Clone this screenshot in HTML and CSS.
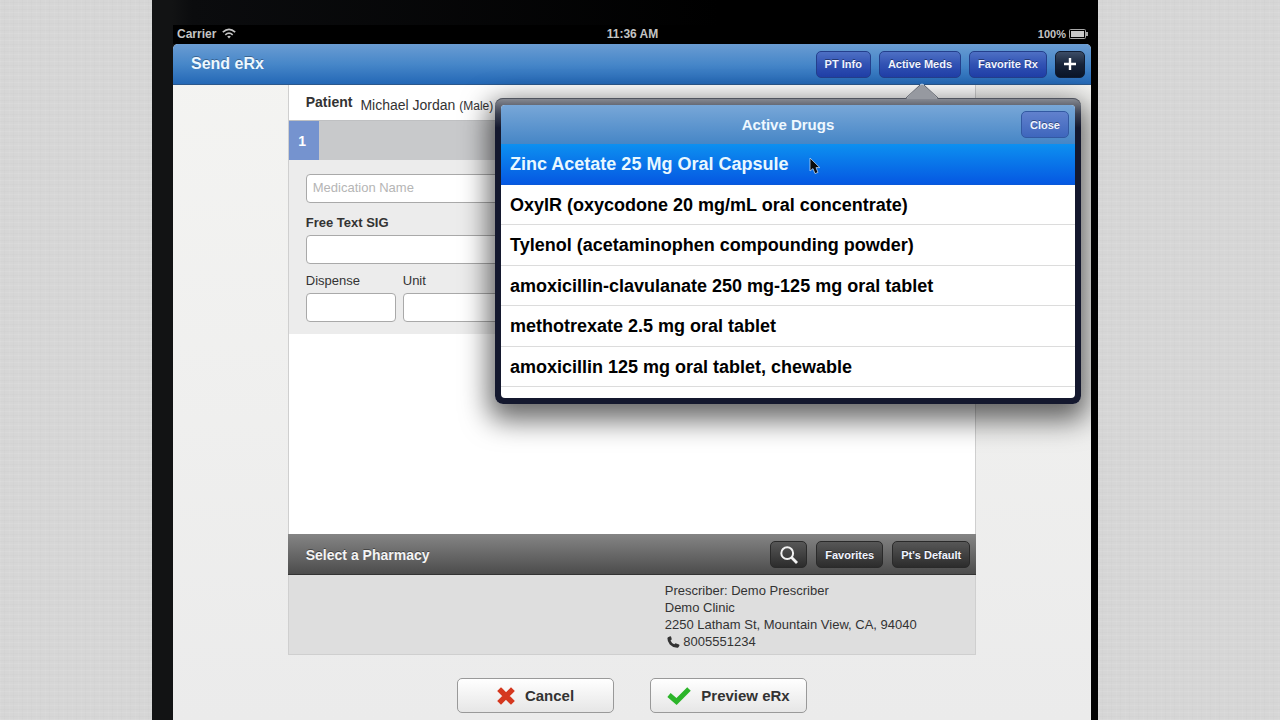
FILE: index.html
```html
<!DOCTYPE html>
<html lang="en">
    <head>
        <meta charset="UTF-8">
        <title>Send eRx</title>
        <link rel="stylesheet" href="styles.css">
    </head>
    <body>
        <div class="device">
            <div class="statusbar">
                <span class="carrier">Carrier
                    <svg width="14" height="11" viewBox="0 0 14 11" fill="none" stroke="#c4c4c4" stroke-width="1.6">
                        <path d="M0.8 4.2 Q7 -1.6 13.2 4.2"/>
                        <path d="M3.3 6.8 Q7 3.4 10.7 6.8"/>
                        <path d="M5.2 8.6 Q7 7 8.8 8.6 L7 10.6 Z" fill="#c4c4c4" stroke="none"/>
                    </svg>
                </span>
                <span class="clock">11:36 AM</span>
                <span class="battery">100%
                    <svg width="19" height="10" viewBox="0 0 19 10">
                        <rect x="0.5" y="0.5" width="16" height="9" rx="1" fill="none" stroke="#a8a8a8"/>
                        <rect x="2" y="2" width="13" height="6" fill="#c8c8c8"/>
                        <rect x="17" y="3" width="2" height="4" fill="#a8a8a8"/>
                    </svg>
                </span>
            </div>

            <div class="screen">
                <header class="navbar">
                    <h1>Send eRx</h1>
                    <button class="btn btn-blue">PT Info</button>
                    <button class="btn btn-blue">Active Meds</button>
                    <button class="btn btn-blue">Favorite Rx</button>
                    <button class="btn btn-add" aria-label="Add">
                        <svg width="12" height="12" viewBox="0 0 12 12" stroke="#fff" stroke-width="2.4"><path d="M6 0V12M0 6H12"/></svg>
                    </button>
                </header>

                <main class="sheet">
                    <div class="patient">
                        <b>Patient</b>
                        <span class="name">Michael Jordan <small>(Male)</small></span>
                    </div>
                    <div class="med-tabs"><span class="tab">1</span></div>
                    <form class="med-form">
                        <input class="med-name" type="text" placeholder="Medication Name" aria-label="Medication Name">
                        <label class="strong" for="sig">Free Text SIG</label>
                        <input id="sig" type="text">
                        <div class="amounts">
                            <div class="dispense">
                                <label for="dispense">Dispense</label>
                                <input id="dispense" type="text">
                            </div>
                            <div class="unit">
                                <label for="unit">Unit</label>
                                <input id="unit" type="text">
                            </div>
                        </div>
                    </form>
                    <div class="blank"></div>
                    <div class="pharmacy">
                        <h2>Select a Pharmacy</h2>
                        <button class="btn btn-dark btn-search" aria-label="Search">
                            <svg width="18" height="18" viewBox="0 0 18 18" fill="none" stroke="#f2f2f2">
                                <circle cx="7.2" cy="7.2" r="5.9" stroke-width="2"/>
                                <path d="M11.6 11.6L17 17" stroke-width="2.8"/>
                            </svg>
                        </button>
                        <button class="btn btn-dark">Favorites</button>
                        <button class="btn btn-dark">Pt's Default</button>
                    </div>
                    <div class="prescriber">
                        <address>
                            Prescriber: Demo Prescriber<br>
                            Demo Clinic<br>
                            2250 Latham St, Mountain View, CA, 94040<br>
                            <svg width="13" height="12" viewBox="0 0 13 12"><path fill="#333" d="M1 1.2 L3.2 0.2 Q3.9 0.1 4.1 0.8 L4.7 3 Q4.7 3.6 4.2 3.9 L3.5 4.4 Q4.4 6.8 7.2 8.2 L8.2 7.5 Q8.7 7.2 9.2 7.4 L12 8.6 Q12.7 9 12.4 9.7 L11.4 11.3 Q11 11.8 10.2 11.8 Q5.8 11.6 2.8 8.4 Q0.3 5.4 0.4 2.2 Q0.5 1.5 1 1.2 Z"/></svg>
                            8005551234
                        </address>
                    </div>
                </main>

                <div class="actions">
                    <button class="btn-action">
                        <svg width="18" height="18" viewBox="0 0 18 18" stroke="#d5381f" stroke-width="5.4" stroke-linecap="square"><path d="M4 4L14 14M14 4L4 14"/></svg>
                        Cancel
                    </button>
                    <button class="btn-action">
                        <svg width="24" height="18" viewBox="0 0 24 18" fill="none" stroke="#2cb52a" stroke-width="5"><path d="M2 8L9.5 14.5L22 2"/></svg>
                        Preview eRx
                    </button>
                </div>

                <section class="popover">
                    <svg class="arrow" width="32" height="16" viewBox="0 0 32 16">
                        <path d="M0 16L14 2Q16 0 18 2L32 16Z" fill="#9699a0"/>
                        <path d="M0 15L14 2M18 2L32 15" fill="none" stroke="#5d626c"/>
                        <path d="M14 2Q16 0 18 2" fill="none" stroke="#b9d2ea"/>
                    </svg>
                    <div class="popover-body">
                        <div class="popover-head">
                            <h2>Active Drugs</h2>
                            <button class="btn btn-close">Close</button>
                        </div>
                        <ul class="drugs">
                            <li class="selected">Zinc Acetate 25 Mg Oral Capsule</li>
                            <li>OxyIR (oxycodone 20 mg/mL oral concentrate)</li>
                            <li>Tylenol (acetaminophen compounding powder)</li>
                            <li>amoxicillin-clavulanate 250 mg-125 mg oral tablet</li>
                            <li>methotrexate 2.5 mg oral tablet</li>
                            <li>amoxicillin 125 mg oral tablet, chewable</li>
                        </ul>
                    </div>
                    <svg class="pointer" width="12" height="18" viewBox="0 0 12 18">
                        <path d="M1 1V14L4 11.6L6 16.6L9 15.4L7 10.6H10.8Z" fill="#0a0a0a" stroke="#b8d4f4" stroke-width="0.8"/>
                    </svg>
                </section>
            </div>
        </div>
    </body>
</html>
```
FILE: styles.css
```css
* {
    box-sizing: border-box;
}
body {
    margin: 0;
    padding: 0 182px 0 152px;
    font-family: "Liberation Sans", Helvetica, Arial, sans-serif;
    color: #333;
    /* linen weave */
    background-color: #d6d6d6;
    background-image:
        repeating-linear-gradient(0deg, rgba(255,255,255,.08) 0 1px, transparent 1px 3px, rgba(0,0,0,.01) 3px 4px, transparent 4px 7px),
        repeating-linear-gradient(90deg, rgba(255,255,255,.06) 0 1px, transparent 1px 4px, rgba(0,0,0,.01) 4px 5px, transparent 5px 9px);
}
h1, h2, ul {
    margin: 0;
    padding: 0;
}
button, input {
    font-family: inherit;
}

.device {
    display: flex;
    flex-direction: column;
    min-height: 100vh;
    padding: 25px 7px 0 21px;
    background: linear-gradient(90deg, #121314, #121314 20px, #0b0c0e 40px, #000 60%);
}
.statusbar {
    display: grid;
    grid-template-columns: 1fr auto 1fr;
    align-items: center;
    height: 19px;
    padding: 0 3px 1px 4px;
    background: #000;
    color: #c4c4c4;
    font-size: 12px;
    font-weight: bold;
}
.carrier svg {
    margin-left: 2px;
    vertical-align: -1px;
}
.battery {
    text-align: right;
    font-size: 11px;
}
.battery svg {
    vertical-align: -1px;
}

.screen {
    position: relative;
    flex: 1;
    display: flex;
    flex-direction: column;
    border-radius: 5px 5px 0 0;
    background: linear-gradient(#f4f4f2, #ebebeb);
    overflow: hidden;
}

/* top bar */
.navbar {
    display: flex;
    align-items: center;
    gap: 8px;
    height: 41px;
    padding: 0 6px 0 18px;
    background: linear-gradient(#6a9cd3, #4787c9 50%, #2468b6);
    border-bottom: 1px solid #2b588c;
}
.navbar h1 {
    flex: 1;
    font-size: 16px;
    color: #eef8ff;
    text-shadow: 0 -1px 0 rgba(0,0,0,.3);
}
.btn {
    height: 27px;
    padding: 0 8px;
    border: 1px solid;
    border-radius: 5px;
    color: #f0f4ff;
    font-size: 11px;
    font-weight: bold;
    text-shadow: 0 -1px 0 rgba(0,0,0,.4);
    white-space: nowrap;
}
.btn svg {
    display: block;
    margin: 0 auto;
}
.btn-blue {
    border-color: #243f8c;
    background: linear-gradient(#4e70c4, #3152b3 50%, #203fa8);
}
.btn-add {
    width: 30px;
    padding: 0;
    border-color: #101d33;
    background: linear-gradient(#3c4d66, #17243a 50%, #0b1528);
}

/* prescription sheet */
.sheet {
    flex: 1;
    display: flex;
    flex-direction: column;
    width: 75%;
    margin: 0 auto;
    border: solid #cfcfcf;
    border-width: 0 1px 1px;
    background: #fff;
}
.patient {
    display: flex;
    gap: 8px;
    height: 35px;
    padding: 8px 17px 0;
    font-size: 14px;
    line-height: 18px;
}
.name {
    padding-top: 3px;
}
.name small {
    font-size: 12px;
}
.med-tabs {
    height: 40px;
    background: #c8c9cb;
    border-top: 1px solid #bfc0c2;
}
.tab {
    display: block;
    width: 30px;
    height: 39px;
    background: #7593cf;
    color: #fff;
    font-size: 14px;
    font-weight: bold;
    line-height: 40px;
    text-align: center;
    padding-right: 3px;
}
.med-form {
    padding: 14px 17px 12px;
    background: #ececec;
}
.med-form label {
    display: block;
    margin-bottom: 4px;
    font-size: 13px;
    line-height: 16px;
}
.med-form .strong {
    margin-top: 12px;
    font-weight: bold;
}
.med-form input {
    display: block;
    width: 100%;
    height: 29px;
    padding: 0 6px 2px;
    border: 1px solid #a9a9a9;
    border-radius: 4px;
    background: #fff;
    font-size: 13px;
}
.med-form input::placeholder {
    color: #b5b5b5;
}
.amounts {
    display: flex;
    gap: 7px;
    margin-top: 9px;
}
.dispense {
    width: 90px;
}
.unit {
    flex: 1;
}
.blank {
    flex: 1;
}
.pharmacy {
    display: flex;
    align-items: center;
    gap: 9px;
    height: 41px;
    margin: 0 -1px;
    padding: 1px 6px 0 18px;
    background: linear-gradient(#858585, #4c4c4c);
    border-bottom: 1px solid #333;
}
.pharmacy h2 {
    flex: 1;
    color: #f4f4f4;
    font-size: 14px;
    text-shadow: 0 -1px 0 rgba(0,0,0,.4);
}
.btn-dark {
    border-color: #2a2a2a;
    background: linear-gradient(#575757, #2c2c2c);
}
.btn-search {
    width: 37px;
}
.prescriber {
    height: 79px;
    padding: 7px 0 0 376px;
    background: #dedede;
}
.prescriber address {
    font-size: 13px;
    font-style: normal;
    line-height: 17px;
    white-space: nowrap;
}
.prescriber svg {
    margin-left: 2px;
    vertical-align: -2px;
}

/* bottom buttons */
.actions {
    display: flex;
    justify-content: center;
    gap: 36px;
    padding: 23px 0 7px;
}
.btn-action {
    display: flex;
    align-items: center;
    justify-content: center;
    gap: 10px;
    width: 157px;
    height: 35px;
    border: 1px solid #999;
    border-radius: 5px;
    background: linear-gradient(#fff, #e6e6e6);
    color: #333;
    font-size: 15px;
    font-weight: bold;
}

/* active drugs popover */
.popover {
    position: absolute;
    top: 54px;
    right: 10px;
    width: 586px;
    padding: 7px 6px 6px;
    border-radius: 8px;
    background: linear-gradient(#8b8e96, #6b6f7a 6px, #3a3f50 16px, #14182e 30px);
    box-shadow: 0 10px 28px 6px rgba(0,0,0,.6), inset 0 1px 0 #50545e;
}
.arrow {
    position: absolute;
    top: -15px;
    right: 143px;
}
.popover-body {
    height: 293px;
    border-radius: 4px;
    background: #fff;
    overflow: hidden;
}
.popover-head {
    display: grid;
    grid-template-columns: 1fr auto 1fr;
    align-items: center;
    height: 39px;
    padding: 0 6px;
    background: linear-gradient(#78a7d8, #4686c6);
}
.popover-head h2 {
    grid-column: 2;
    color: #eef8ff;
    font-size: 15px;
}
.btn-close {
    justify-self: end;
    width: 48px;
    padding: 0;
    border-color: #3259a2;
    background: linear-gradient(#6181cd, #3e66bd);
}
.drugs {
    display: grid;
    grid-template-rows: repeat(6, 1fr);
    height: 243px;
    list-style: none;
    color: #000;
    font-size: 18px;
    font-weight: bold;
}
.drugs li {
    display: flex;
    align-items: center;
    padding: 2px 9px 0;
    border-bottom: 1px solid #dcdcdc;
}
.drugs .selected {
    border-bottom-color: #0a58d8;
    background: linear-gradient(#0d90f0, #0558e2);
    color: #e8f8ff;
}
.pointer {
    position: absolute;
    top: 59px;
    left: 314px;
}
```
